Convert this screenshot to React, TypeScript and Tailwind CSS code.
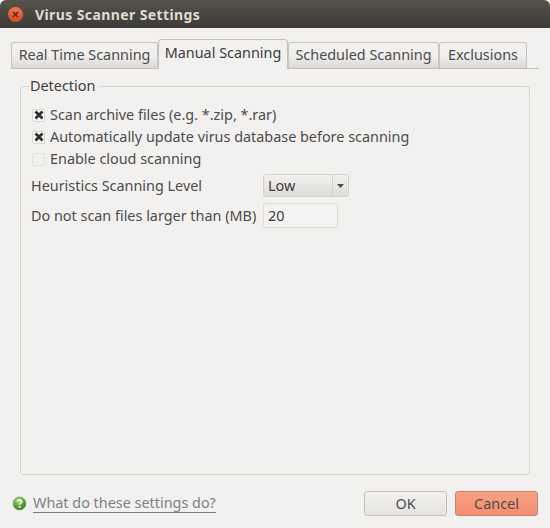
const tabs = [
  { label: "Real Time Scanning", w: "w-[147px]" },
  { label: "Manual Scanning", w: "w-[130px]", active: true },
  { label: "Scheduled Scanning", w: "w-[151px]" },
  { label: "Exclusions", w: "w-[88px]" },
];

const Check = ({ checked, disabled }: { checked?: boolean; disabled?: boolean }) => (
  <span
    className={`flex h-[13px] w-[13px] shrink-0 items-center justify-center rounded-[2px] border ${
      disabled ? "border-[#e2e0dd] bg-[#f2f1f0]" : "border-[#d8d6d2] bg-[#f8f7f6]"
    }`}
  >
    {checked && (
      <svg width="10" height="10" viewBox="0 0 10 10">
        <path d="M1.5 1.5 L8.5 8.5 M8.5 1.5 L1.5 8.5" stroke="#2f2f2f" strokeWidth="2.8" />
      </svg>
    )}
  </span>
);

export default function App() {
  return (
    <div className="flex h-[528px] w-[550px] flex-col overflow-hidden bg-[#f2f1f0] font-['Noto_Sans',sans-serif] text-[14.4px] text-[#4c4c4c]">
      {/* title bar */}
      <div className="flex h-[28px] shrink-0 items-center rounded-t-[6px] bg-gradient-to-b from-[#56534b] to-[#3d3b37] pl-[8px]">
        <span className="flex h-[15px] w-[15px] items-center justify-center rounded-full bg-gradient-to-b from-[#f0764a] to-[#d9471f]">
          <svg width="7" height="7" viewBox="0 0 7 7">
            <path d="M1 1 L6 6 M6 1 L1 6" stroke="#4a2014" strokeWidth="1.2" />
          </svg>
        </span>
        <span className="ml-[12px] text-[14px] font-bold tracking-[0.4px] text-[#dfdbd2]">Virus Scanner Settings</span>
      </div>

      {/* tabs */}
      <div className="mx-[11px] mt-[11px] flex h-[30px] shrink-0 items-end border-b border-[#c4c1bb]">
        {tabs.map((tab) =>
          tab.active ? (
            <div
              key={tab.label}
              className={`relative -mb-px flex h-[30px] ${tab.w} items-center justify-center rounded-t-[4px] border border-b-0 border-[#c4c1bb] bg-[#f2f1f0] pb-[3px] text-[#3c3c3c]`}
            >
              {tab.label}
            </div>
          ) : (
            <div
              key={tab.label}
              className={`flex h-[26px] ${tab.w} items-center justify-center rounded-t-[3px] border border-b-0 border-[#c9c6c1] bg-gradient-to-b from-[#f2f1f0] via-[#f0efee] to-[#dcdad6] pb-[2px] text-[#4c4c4c]`}
            >
              {tab.label}
            </div>
          ),
        )}
      </div>

      {/* group box */}
      <fieldset className="mx-[20px] mt-[8px] h-[398px] shrink-0 rounded-[3px] border border-[#d8d6d3] px-[10px] pt-[2px]">
        <legend className="ml-[-2px] pl-[1px] pr-[4px] leading-[18px] text-[#3c3c3c]">Detection</legend>
        <div className="mt-[7px] flex flex-col">
          <label className="flex h-[22px] items-center gap-[5px] pl-[1px]">
            <Check checked />
            <span>Scan archive files (e.g. *.zip, *.rar)</span>
          </label>
          <label className="flex h-[22px] items-center gap-[5px] pl-[1px]">
            <Check checked />
            <span>Automatically update virus database before scanning</span>
          </label>
          <label className="flex h-[22px] items-center gap-[5px] pl-[1px]">
            <Check disabled />
            <span>Enable cloud scanning</span>
          </label>
          <div className="mt-[3px] flex h-[25px] items-center">
            <span className="w-[232px]">Heuristics Scanning Level</span>
            <div className="flex h-[23px] w-[86px] items-center rounded-[3px] border border-[#d5d3cf] bg-gradient-to-b from-[#f2f1f0] to-[#dfddd9]">
              <span className="flex-1 pl-[4px] text-[#3c3c3c]">Low</span>
              <span className="flex h-full w-[16px] items-center justify-center border-l border-[#d5d3cf]">
                <svg width="7" height="4" viewBox="0 0 7 4">
                  <path d="M0 0 H7 L3.5 4 Z" fill="#4c4c4c" />
                </svg>
              </span>
            </div>
          </div>
          <div className="mt-[5px] flex h-[25px] items-center">
            <span className="w-[232px]">Do not scan files larger than (MB)</span>
            <div className="flex h-[25px] w-[75px] items-center rounded-[3px] border border-[#dcdad7] bg-[#f4f3f2] pl-[4px] text-[#3c3c3c]">
              20
            </div>
          </div>
        </div>
      </fieldset>

      {/* footer */}
      <div className="flex flex-1 items-center pl-[12px] pr-[12px] pt-[4px]">
        <svg width="15" height="15" viewBox="0 0 15 15">
          <defs>
            <radialGradient id="help" cx="40%" cy="25%" r="80%">
              <stop offset="0%" stopColor="#a6d86a" />
              <stop offset="100%" stopColor="#2c7d1c" />
            </radialGradient>
          </defs>
          <circle cx="7.5" cy="7.5" r="6.5" fill="url(#help)" stroke="#5a8f45" strokeWidth="0.5" />
          <path d="M5.4 5.6 C5.6 3.6 9.6 3.6 9.6 5.8 C9.6 7.2 7.6 7.2 7.6 8.8" fill="none" stroke="#fff" strokeWidth="1.6" />
          <rect x="6.8" y="10" width="1.7" height="1.7" fill="#fff" />
        </svg>
        <span className="ml-[6px] border-b border-[#7a7a7a] leading-[18px] text-[#7b8187]">What do these settings do?</span>
        <div className="ml-auto flex gap-[8px]">
          <button className="h-[25px] w-[83px] rounded-[3px] border border-[#c4c1bb] bg-gradient-to-b from-[#f2f1f0] to-[#e6e4e1] text-[#4c4c4c]">OK</button>
          <button className="h-[25px] w-[83px] rounded-[3px] border border-[#bf8a70] bg-gradient-to-b from-[#f9a084] to-[#f58f6e] text-[#4c4c4c]">Cancel</button>
        </div>
      </div>
    </div>
  );
}
